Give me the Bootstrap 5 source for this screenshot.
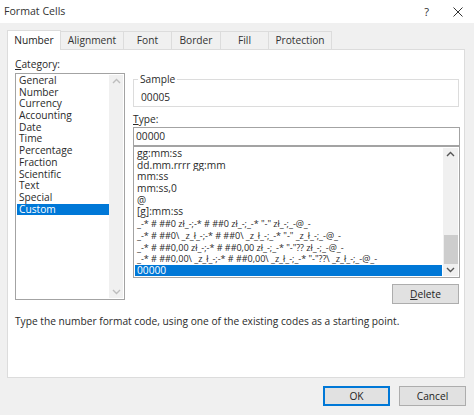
<!DOCTYPE html>
<html lang="en">
<head>
<meta charset="utf-8">
<title>Format Cells</title>
<link href="https://cdn.jsdelivr.net/npm/bootstrap@5.3.0/dist/css/bootstrap.min.css" rel="stylesheet">
<style>
html,body{margin:0;height:415px;overflow:hidden;background:#f0f0f0;}
body,.dlg *{font-family:"Open Sans","Noto Sans",sans-serif;font-size:10.2px;line-height:11.7px;color:#2a2a2a;}
.dlg{width:474px;height:415px;display:flex;flex-direction:column;}
.ttl{height:23px;background:#fff;padding:0 11px 0 4px;}
.ttl-name{font-size:10.6px;color:#333;}
.ttl-help{font-size:11px;margin-right:24px;margin-top:1px;}
.wrap{flex:1;padding:8px 9px 0 7px;}
.nav-tabs.tabbar{border:0;height:18px;gap:0;margin:0;}
.tabbar .nav-link{height:18px;padding:0;border:1px solid #dcdcdc;border-left:0;border-bottom:0;border-radius:0;background:#f0f0f0;color:#333;margin:0;display:flex;align-items:center;justify-content:center;}
.tabbar .nav-link.active{background:#fff;border:1px solid #dcdcdc;border-bottom:0;height:20px;margin-top:-1px;position:relative;z-index:1;color:#222;}
.t1{width:54px}.t2{width:63px}.t3{width:48px}.t4{width:49px}.t5{width:48px}.t6{width:63px}
.panel{background:#fff;border:1px solid #dcdcdc;width:458px;height:329px;padding:9px 6px 0 7px;}
.lbl{height:11px;line-height:11px;}
.lbl-cat{margin-bottom:3px;}
.cols{display:flex;gap:8px;}
.catbox{width:110px;height:227px;border:1px solid #a3a3a3;display:flex;flex-shrink:0;padding:1px;}
.rows{flex:1;min-width:0;overflow:hidden;}
.rowi{height:11.7px;padding-left:2px;white-space:nowrap;overflow:hidden;}
.catbox .rowi{padding-left:2px;}
.rowi.sel{background:#0078d7;color:#fff;}
.sbar{width:14px;display:flex;flex-direction:column;justify-content:space-between;align-items:center;background:#f0f0f0;flex-shrink:0;padding:3px 0;}
.sbar svg{display:block;}
.sbar-thumb{width:14px;height:29px;background:#cdcdcd;margin-top:auto;margin-bottom:3px;}
.rightcol{width:327px;padding-top:6px;}
.fset{border:1px solid #dcdcdc;width:326px;height:28px;position:relative;padding:12px 0 0 7px;margin:0;}
.fset-leg{position:absolute;left:4px;top:-6px;background:#fff;padding:0 2px;line-height:11px;}
.lbl-type{margin-top:7px;margin-bottom:2px;}
.tinput{height:19px;width:327px;border:1px solid #a3a3a3;padding:3px 2px;line-height:11.7px;}
.tlist{height:132px;width:327px;border:1px solid #a3a3a3;margin-top:0;display:flex;padding:1px;}
.tlist .sbar{width:15px;margin-left:1px;}
.small-code{font-size:9.1px;letter-spacing:-.05px;}
.delrow{display:flex;justify-content:flex-end;margin-top:6px;padding-right:1px;}
.btn.wbtn{width:67px;height:20px;padding:0;background:#e1e1e1;border:1px solid #adadad;border-radius:0;color:#222;line-height:17px;}
.help{margin-top:12px;}
.foot{display:flex;justify-content:flex-end;gap:9px;margin-top:8px;margin-right:-1px;}
.btn.wbtn.def{border:2px solid #0078d7;line-height:15px;}
u{text-underline-offset:1px;}
</style>
</head>
<body>
<div class="dlg">
  <div class="ttl d-flex align-items-center">
    <span class="ttl-name me-auto">Format Cells</span>
    <span class="ttl-help">?</span>
    <svg width="10" height="10" viewBox="0 0 10 10" aria-hidden="true"><path d="M.5.5l9 9M9.5.5l-9 9" stroke="#333" stroke-width="1" fill="none"/></svg>
  </div>
  <div class="wrap">
    <ul class="nav nav-tabs tabbar">
      <li class="nav-item"><span class="nav-link active t1">Number</span></li>
      <li class="nav-item"><span class="nav-link t2">Alignment</span></li>
      <li class="nav-item"><span class="nav-link t3">Font</span></li>
      <li class="nav-item"><span class="nav-link t4">Border</span></li>
      <li class="nav-item"><span class="nav-link t5">Fill</span></li>
      <li class="nav-item"><span class="nav-link t6">Protection</span></li>
    </ul>
    <div class="panel">
      <div class="lbl lbl-cat"><u>C</u>ategory:</div>
      <div class="cols">
        <div class="catbox">
          <div class="rows">
            <div class="rowi">General</div>
            <div class="rowi">Number</div>
            <div class="rowi">Currency</div>
            <div class="rowi">Accounting</div>
            <div class="rowi">Date</div>
            <div class="rowi">Time</div>
            <div class="rowi">Percentage</div>
            <div class="rowi">Fraction</div>
            <div class="rowi">Scientific</div>
            <div class="rowi">Text</div>
            <div class="rowi">Special</div>
            <div class="rowi sel">Custom</div>
          </div>
          <div class="sbar">
            <svg width="9" height="6" viewBox="0 0 9 6" aria-hidden="true"><path d="M1 5l3.5-3.5L8 5" stroke="#bdbdbd" stroke-width="1.4" fill="none"/></svg>
            <svg width="9" height="6" viewBox="0 0 9 6" aria-hidden="true"><path d="M1 1l3.500 3.500L8 1" stroke="#bdbdbd" stroke-width="1.4" fill="none"/></svg>
          </div>
        </div>
        <div class="rightcol">
          <div class="fset"><span class="fset-leg">Sample</span>00005</div>
          <div class="lbl lbl-type"><u>T</u>ype:</div>
          <div class="tinput">00000</div>
          <div class="tlist">
            <div class="rows">
              <div class="rowi">gg:mm:ss</div>
              <div class="rowi">dd.mm.rrrr gg:mm</div>
              <div class="rowi">mm:ss</div>
              <div class="rowi">mm:ss,0</div>
              <div class="rowi">@</div>
              <div class="rowi">[g]:mm:ss</div>
              <div class="rowi small-code">_-* # ##0 zł_-;-* # ##0 zł_-;_-* "-" zł_-;_-@_-</div>
              <div class="rowi small-code">_-* # ##0\ _z_ł_-;-* # ##0\ _z_ł_-;_-* "-" _z_ł_-;_-@_-</div>
              <div class="rowi small-code">_-* # ##0,00 zł_-;-* # ##0,00 zł_-;_-* "-"?? zł_-;_-@_-</div>
              <div class="rowi small-code">_-* # ##0,00\ _z_ł_-;-* # ##0,00\ _z_ł_-;_-* "-"??\ _z_ł_-;_-@_-</div>
              <div class="rowi sel">00000</div>
            </div>
            <div class="sbar">
              <svg width="9" height="6" viewBox="0 0 9 6" aria-hidden="true"><path d="M1 5l3.500-3.500L8 5" stroke="#555" stroke-width="1.400" fill="none"/></svg>
              <div class="sbar-thumb"></div>
              <svg width="9" height="6" viewBox="0 0 9 6" aria-hidden="true"><path d="M1 1l3.500 3.500L8 1" stroke="#555" stroke-width="1.400" fill="none"/></svg>
            </div>
          </div>
          <div class="delrow"><button type="button" class="btn wbtn"><u>D</u>elete</button></div>
        </div>
      </div>
      <div class="help">Type the number format code, using one of the existing codes as a starting point.</div>
    </div>
    <div class="foot">
      <button type="button" class="btn wbtn def">OK</button>
      <button type="button" class="btn wbtn">Cancel</button>
    </div>
  </div>
</div>
</body>
</html>
